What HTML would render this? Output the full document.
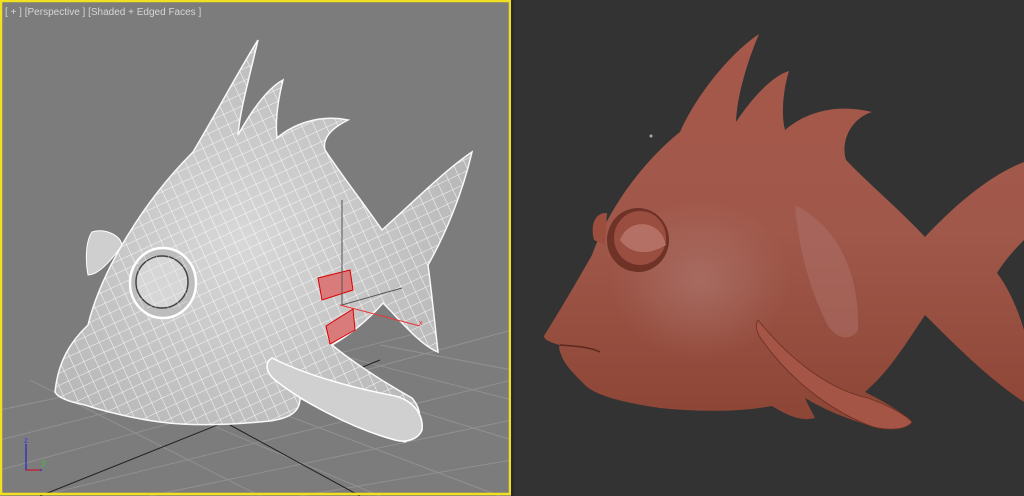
<!DOCTYPE html>
<html><head><style>
html,body{margin:0;padding:0;width:1024px;height:496px;overflow:hidden;background:#333}
svg{display:block}
</style></head><body>
<svg width="1024" height="496" viewBox="0 0 1024 496" xmlns="http://www.w3.org/2000/svg">
<defs>
<pattern id="mesh" width="11" height="11" patternUnits="userSpaceOnUse" patternTransform="rotate(-25)">
<path d="M0 0H11M0 0V11" stroke="#ffffff" stroke-width="1.1" fill="none"/>
</pattern>
<radialGradient id="gl" cx="0.45" cy="0.5" r="0.7">
<stop offset="0" stop-color="#d8d8d8"/><stop offset="1" stop-color="#b0b0b0"/>
</radialGradient>
<linearGradient id="rd" x1="0" y1="0" x2="0" y2="1">
<stop offset="0" stop-color="#a6584a"/><stop offset="0.5" stop-color="#a0584a"/><stop offset="1" stop-color="#8c4435"/>
</linearGradient>
<radialGradient id="hl" cx="0.5" cy="0.5" r="0.5">
<stop offset="0" stop-color="#b07a72" stop-opacity="0.6"/><stop offset="1" stop-color="#b07a72" stop-opacity="0"/>
</radialGradient>
</defs>
<rect x="0" y="0" width="512" height="496" fill="#7c7c7c"/>
<g stroke="#999" stroke-width="1" opacity="0.7">
<path d="M0 470L512 330M0 440L430 330M0 410L330 340M40 496L512 380M150 496L512 420M300 496L512 460"/>
<path d="M30 380L260 496M80 370L380 496M140 360L500 496M220 350L512 440M300 345L512 400M380 345L512 370"/>
</g>
<path d="M40 496L380 360" stroke="#222" stroke-width="1"/>
<path d="M230 425L360 496" stroke="#222" stroke-width="1"/>
<path id="lfs" d="M55 392 C58 362 70 342 88 325 C100 275 140 205 193 152 C218 110 242 65 258 40 C250 75 240 110 238 135 C252 110 268 88 283 80 C278 100 275 120 277 138 C292 125 318 114 348 120 C332 128 322 138 325 150 C345 180 365 205 382 230 C410 205 445 170 472 152 C462 195 445 235 428 265 C432 295 435 325 438 352 C420 345 400 320 383 303 C370 318 350 335 332 345 C350 360 380 380 412 398 C424 412 422 432 405 442 C370 432 330 415 300 398 C300 412 290 418 270 421 C230 425 190 426 160 422 C130 418 100 410 85 405 C70 402 58 398 55 392Z" fill="url(#gl)" stroke="#f8f8f8" stroke-width="1.5"/>
<clipPath id="cl"><use href="#lfs"/></clipPath>
<rect x="40" y="30" width="440" height="420" fill="url(#mesh)" clip-path="url(#cl)" opacity="0.85"/>
<path d="M92 232 C105 228 120 235 122 245 C115 255 100 275 88 275 C85 260 86 240 92 232Z" fill="#cfcfcf" stroke="#fff"/>
<ellipse cx="163" cy="283" rx="33" ry="35" fill="#bdbdbd" stroke="#fff" stroke-width="2.5"/>
<ellipse cx="162" cy="282" rx="26" ry="26" fill="#d6d6d6" stroke="#444" stroke-width="1.5"/>
<rect x="137" y="256" width="50" height="52" fill="url(#mesh)" clip-path="url(#cl)" opacity="0.6"/>
<path d="M272 358 C300 372 340 385 390 395 C410 398 424 412 422 430 C418 440 405 443 395 440 C350 428 300 400 275 380 C265 372 265 362 272 358Z" fill="#d0d0d0" stroke="#fff" stroke-width="1.5"/>
<path d="M318 278L350 270L353 290L322 300Z" fill="#d97b7b" stroke="#d00"/>
<path d="M326 326L353 309L355 330L330 344Z" fill="#d97b7b" stroke="#d00"/>
<path d="M342 200V305L402 288" stroke="#555" fill="none"/>
<path d="M340 305L420 326" stroke="#e33" fill="none"/>
<text x="419" y="325" fill="#e33" font-family="Liberation Sans,sans-serif" font-size="7">x</text>
<path d="M26 444V470H42" stroke="#22c" stroke-width="1.2" fill="none"/>
<path d="M26 470H40" stroke="#d22" stroke-width="1.2"/>
<text x="24" y="443" fill="#33f" font-family="Liberation Sans,sans-serif" font-size="8">z</text>
<text x="42" y="465" fill="#3c3" font-family="Liberation Sans,sans-serif" font-size="8">y</text>
<text x="5" y="15" fill="#d6d6d6" font-family="Liberation Sans,sans-serif" font-size="10">[ + ] [Perspective ] [Shaded + Edged Faces ]</text>
<rect x="1" y="1" width="509" height="493" fill="none" stroke="#f0e020" stroke-width="2.5"/>
<rect x="511" y="0" width="3" height="496" fill="#2a2a2a"/>
<rect x="514" y="0" width="510" height="496" fill="#333333"/>
<circle cx="651" cy="136" r="1.5" fill="#aaa"/>
<path d="M544 336 C560 310 575 285 592 255 C610 205 645 160 680 132 C700 88 735 50 759 34 C748 60 737 95 736 122 C752 98 772 76 789 71 C783 90 781 115 785 130 C808 110 840 104 872 112 C852 118 840 140 846 160 C870 185 900 210 925 237 C955 205 990 175 1024 162 V240 C1012 252 1003 263 997 273 C1004 282 1015 300 1024 330 V402 C990 380 955 345 925 315 C905 345 890 370 865 392 C885 402 905 414 912 422 C905 432 880 430 868 425 C845 418 825 410 805 398 C808 405 812 412 815 418 C800 422 785 414 772 406 C740 412 700 412 660 408 C620 402 595 395 585 385 C575 375 565 365 562 357 C560 352 558 347 560 345 C552 343 544 340 544 336Z" fill="url(#rd)"/>
<ellipse cx="700" cy="280" rx="90" ry="80" fill="url(#hl)"/>
<path d="M758 320 C790 360 830 390 868 398 C885 404 905 414 912 422 C905 432 880 430 868 425 C830 410 790 380 762 340 C756 332 755 325 758 320Z" fill="#a55545" stroke="#6d3024" stroke-width="0.8"/>
<path d="M795 205 C835 225 860 270 858 330 C848 345 832 335 826 322 C808 285 798 245 795 205Z" fill="#ad7068" opacity="0.55"/>
<path d="M607 213 C595 212 590 225 594 240 L605 245Z" fill="#9b4e3e"/>
<ellipse cx="638" cy="240" rx="31" ry="32" fill="#6e3226"/>
<ellipse cx="640" cy="238" rx="26" ry="27" fill="#9a4e3f"/>
<path d="M620 240 C628 218 660 218 666 245 C648 256 630 254 620 240Z" fill="#b57066"/>
<path d="M560 345 C575 346 590 347 600 352" stroke="#5f281d" stroke-width="1.5" fill="none"/>
</svg>
</body></html>
